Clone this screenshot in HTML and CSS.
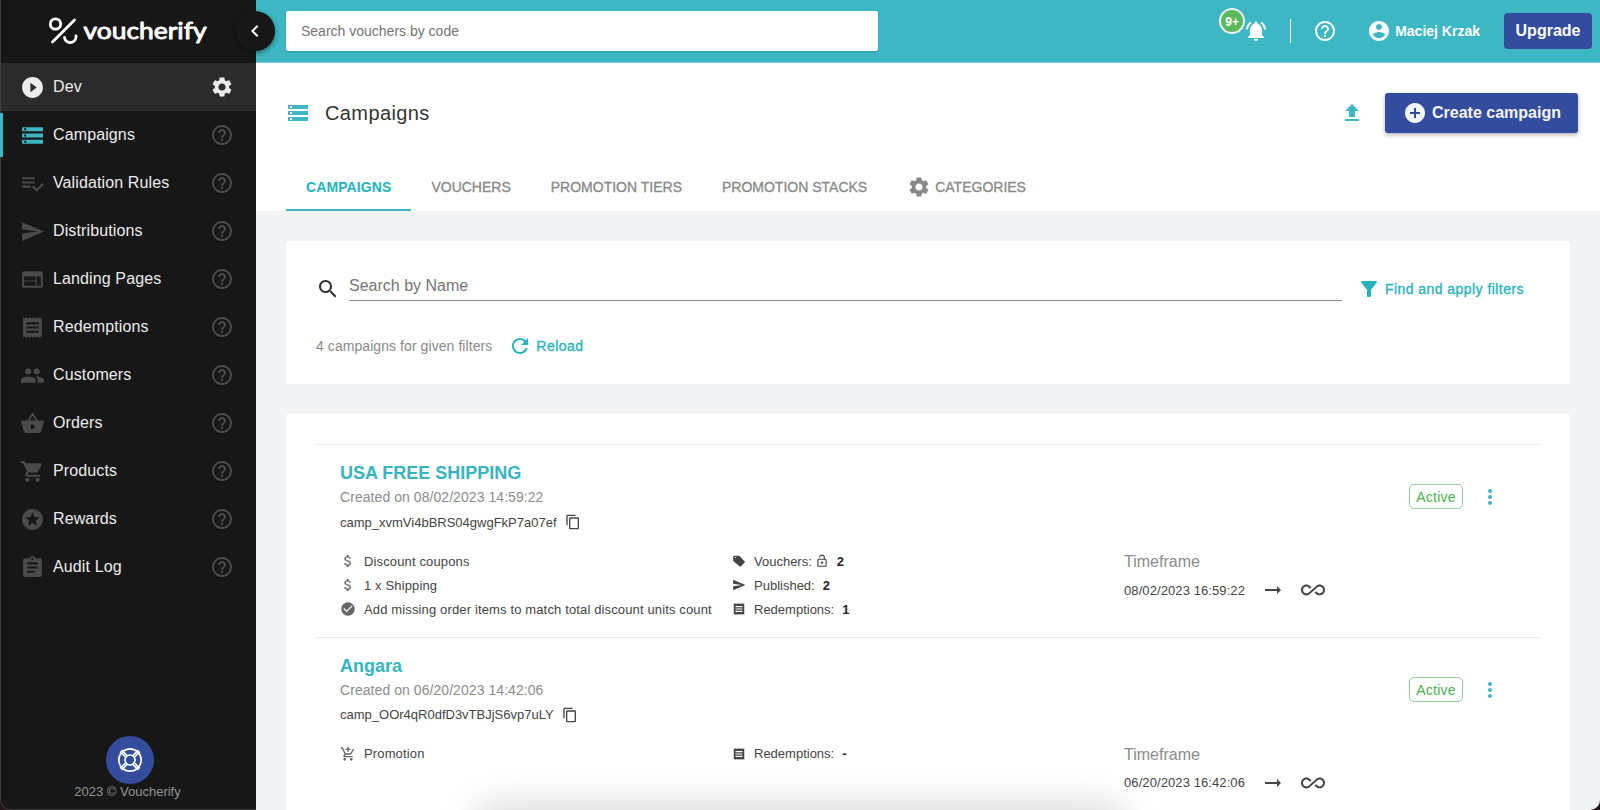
FILE: index.html
```html
<!DOCTYPE html>
<html lang="en">
<head>
    <meta charset="UTF-8"/>
    <meta name="viewport" content="width=device-width, initial-scale=1"/>
    <title>Campaigns - Voucherify</title>
    <link rel="stylesheet" href="styles.css">
</head>
<body>
<!-- icon sprite -->
<svg class="sprite">
    <symbol id="i-campaigns" viewBox="0 0 24 24"><path d="M2 20h20v-4H2v4zm2-3h2v2H4v-2zM2 4v4h20V4H2zm4 3H4V5h2v2zm-4 7h20v-4H2v4zm2-3h2v2H4v-2z"/></symbol>
    <symbol id="i-rules" viewBox="0 0 24 24"><path d="M14 10H2v2h12v-2zm0-4H2v2h12V6zM2 16h8v-2H2v2zm19.5-4.5L23 13l-6.99 7-4.51-4.5L13 14l3.01 3 5.49-5.5z"/></symbol>
    <symbol id="i-send" viewBox="0 0 24 24"><path d="M2.01 21L23 12 2.01 3 2 10l15 2-15 2z"/></symbol>
    <symbol id="i-web" viewBox="0 0 24 24"><path d="M20 4H4c-1.1 0-1.99.9-1.99 2L2 18c0 1.1.9 2 2 2h16c1.1 0 2-.9 2-2V6c0-1.1-.9-2-2-2zm-5 14H4v-4h11v4zm0-5H4V9h11v4zm5 5h-4V9h4v9z"/></symbol>
    <symbol id="i-receipt" viewBox="0 0 24 24"><path d="M18 17H6v-2h12v2zm0-4H6v-2h12v2zm0-4H6V7h12v2zM3 22l1.5-1.5L6 22l1.5-1.5L9 22l1.5-1.5L12 22l1.5-1.5L15 22l1.5-1.5L18 22l1.5-1.5L21 22V2l-1.5 1.5L18 2l-1.5 1.5L15 2l-1.5 1.5L12 2l-1.5 1.5L9 2 7.5 3.5 6 2 4.5 3.5 3 2v20z"/></symbol>
    <symbol id="i-people" viewBox="0 0 24 24"><path d="M16 11c1.66 0 2.99-1.34 2.99-3S17.66 5 16 5c-1.66 0-3 1.34-3 3s1.34 3 3 3zm-8 0c1.66 0 2.99-1.34 2.99-3S9.66 5 8 5C6.34 5 5 6.34 5 8s1.34 3 3 3zm0 2c-2.33 0-7 1.17-7 3.5V19h14v-2.5c0-2.33-4.67-3.5-7-3.5zm8 0c-.29 0-.62.02-.97.05 1.16.84 1.97 1.97 1.97 3.45V19h6v-2.5c0-2.33-4.67-3.5-7-3.5z"/></symbol>
    <symbol id="i-basket" viewBox="0 0 24 24"><path d="M17.21 9l-4.38-6.56c-.19-.28-.51-.42-.83-.42-.32 0-.64.14-.83.43L6.79 9H2c-.55 0-1 .45-1 1 0 .09.01.18.04.27l2.54 9.27c.23.84 1 1.46 1.92 1.46h13c.92 0 1.69-.62 1.93-1.46l2.54-9.27L23 10c0-.55-.45-1-1-1h-4.79zM9 9l3-4.4L15 9H9zm3 8c-1.1 0-2-.9-2-2s.9-2 2-2 2 .9 2 2-.9 2-2 2z"/></symbol>
    <symbol id="i-cart" viewBox="0 0 24 24"><path d="M7 18c-1.1 0-1.99.9-1.99 2S5.9 22 7 22s2-.9 2-2-.9-2-2-2zM1 2v2h2l3.6 7.59-1.35 2.45c-.16.28-.25.61-.25.96 0 1.1.9 2 2 2h12v-2H7.42c-.14 0-.25-.11-.25-.25l.03-.12.9-1.63h7.45c.75 0 1.41-.41 1.75-1.03l3.58-6.49c.08-.14.12-.31.12-.48 0-.55-.45-1-1-1H5.21l-.94-2H1zm16 16c-1.1 0-1.99.9-1.99 2s.89 2 1.99 2 2-.9 2-2-.9-2-2-2z"/></symbol>
    <symbol id="i-stars" viewBox="0 0 24 24"><path d="M11.99 2C6.47 2 2 6.48 2 12s4.47 10 9.99 10C17.52 22 22 17.52 22 12S17.52 2 11.99 2zm4.24 16L12 15.45 7.77 18l1.12-4.81-3.73-3.23 4.92-.42L12 5l1.92 4.53 4.92.42-3.73 3.23L16.23 18z"/></symbol>
    <symbol id="i-log" viewBox="0 0 24 24"><path d="M19 3h-4.18C14.4 1.84 13.3 1 12 1c-1.3 0-2.4.84-2.82 2H5c-1.1 0-2 .9-2 2v14c0 1.1.9 2 2 2h14c1.1 0 2-.9 2-2V5c0-1.1-.9-2-2-2zm-7 0c.55 0 1 .45 1 1s-.45 1-1 1-1-.45-1-1 .45-1 1-1zm2 14H7v-2h7v2zm3-4H7v-2h10v2zm0-4H7V7h10v2z"/></symbol>
    <symbol id="i-help" viewBox="0 0 24 24"><path d="M11 18h2v-2h-2v2zm1-16C6.48 2 2 6.48 2 12s4.48 10 10 10 10-4.48 10-10S17.52 2 12 2zm0 18c-4.41 0-8-3.59-8-8s3.59-8 8-8 8 3.59 8 8-3.59 8-8 8zm0-14c-2.21 0-4 1.79-4 4h2c0-1.1.9-2 2-2s2 .9 2 2c0 2-3 1.75-3 5h2c0-2.25 3-2.5 3-5 0-2.21-1.79-4-4-4z"/></symbol>
    <symbol id="i-play" viewBox="0 0 24 24"><path d="M12 2C6.48 2 2 6.48 2 12s4.48 10 10 10 10-4.48 10-10S17.52 2 12 2zm-2 14.5v-9l6 4.5-6 4.5z"/></symbol>
    <symbol id="i-gear" viewBox="0 0 24 24"><path d="M19.14 12.94c.04-.3.06-.61.06-.94 0-.32-.02-.64-.07-.94l2.03-1.58c.18-.14.23-.41.12-.61l-1.92-3.32c-.12-.22-.37-.29-.59-.22l-2.39.96c-.5-.38-1.03-.7-1.62-.94l-.36-2.54c-.04-.24-.24-.41-.48-.41h-3.84c-.24 0-.43.17-.47.41l-.36 2.54c-.59.24-1.13.57-1.62.94l-2.39-.96c-.22-.08-.47 0-.59.22L2.74 8.87c-.12.21-.08.47.12.61l2.03 1.58c-.05.3-.09.63-.09.94s.02.64.07.94l-2.03 1.58c-.18.14-.23.41-.12.61l1.92 3.32c.12.22.37.29.59.22l2.39-.96c.5.38 1.03.7 1.62.94l.36 2.54c.05.24.24.41.48.41h3.84c.24 0 .44-.17.47-.41l.36-2.54c.59-.24 1.13-.56 1.62-.94l2.39.96c.22.08.47 0 .59-.22l1.92-3.32c.12-.22.07-.47-.12-.61l-2.01-1.58zM12 15.6c-1.98 0-3.6-1.62-3.6-3.6s1.62-3.6 3.6-3.6 3.6 1.62 3.6 3.6-1.62 3.6-3.6 3.6z"/></symbol>
    <symbol id="i-account" viewBox="0 0 24 24"><path d="M12 2C6.48 2 2 6.48 2 12s4.48 10 10 10 10-4.48 10-10S17.52 2 12 2zm0 3c1.66 0 3 1.34 3 3s-1.34 3-3 3-3-1.34-3-3 1.34-3 3-3zm0 14.2c-2.5 0-4.71-1.28-6-3.22.03-1.99 4-3.08 6-3.08 1.99 0 5.97 1.09 6 3.08-1.29 1.94-3.5 3.22-6 3.22z"/></symbol>
    <symbol id="i-bell" viewBox="0 0 24 24"><path d="M7.58 4.08L6.15 2.65C3.75 4.48 2.17 7.3 2.03 10.5h2c.15-2.65 1.51-4.97 3.55-6.42zm12.39 6.42h2c-.15-3.2-1.73-6.02-4.12-7.85l-1.42 1.43c2.02 1.45 3.39 3.77 3.54 6.42zM18 11c0-3.07-1.64-5.64-4.5-6.32V4c0-.83-.67-1.5-1.5-1.5s-1.5.67-1.5 1.5v.68C7.63 5.36 6 7.92 6 11v5l-2 2v1h16v-1l-2-2v-5zm-6 11c.14 0 .27-.01.4-.04.65-.14 1.18-.58 1.44-1.18.1-.24.15-.5.15-.78h-4c.01 1.1.9 2 2.01 2z"/></symbol>
    <symbol id="i-add" viewBox="0 0 24 24"><path d="M12 2C6.48 2 2 6.48 2 12s4.48 10 10 10 10-4.48 10-10S17.52 2 12 2zm5 11h-4v4h-2v-4H7v-2h4V7h2v4h4v2z"/></symbol>
    <symbol id="i-upload" viewBox="0 0 24 24"><path d="M9 16h6v-6h4l-7-7-7 7h4v6zm-4 2h14v2H5v-2z"/></symbol>
    <symbol id="i-search" viewBox="0 0 24 24"><path d="M15.5 14h-.79l-.28-.27C15.41 12.59 16 11.11 16 9.5 16 5.91 13.09 3 9.5 3S3 5.91 3 9.5 5.91 16 9.5 16c1.61 0 3.09-.59 4.23-1.57l.27.28v.79l5 4.99L20.49 19l-4.99-5zm-6 0C7.01 14 5 11.99 5 9.5S7.01 5 9.5 5 14 7.01 14 9.5 11.99 14 9.5 14z"/></symbol>
    <symbol id="i-filter" viewBox="0 0 24 24"><path d="M4.25 5.61C6.27 8.2 10 13 10 13v6c0 .55.45 1 1 1h2c.55 0 1-.45 1-1v-6s3.72-4.8 5.74-7.39c.51-.66.04-1.61-.79-1.61H5.04c-.83 0-1.3.95-.79 1.61z"/></symbol>
    <symbol id="i-refresh" viewBox="0 0 24 24"><path d="M17.65 6.35C16.2 4.9 14.21 4 12 4c-4.42 0-7.99 3.58-7.99 8s3.57 8 7.99 8c3.73 0 6.84-2.55 7.73-6h-2.08c-.82 2.33-3.04 4-5.65 4-3.31 0-6-2.69-6-6s2.69-6 6-6c1.66 0 3.14.69 4.22 1.78L13 11h7V4l-2.35 2.35z"/></symbol>
    <symbol id="i-copy" viewBox="0 0 24 24"><path d="M16 1H4c-1.1 0-2 .9-2 2v14h2V3h12V1zm3 4H8c-1.1 0-2 .9-2 2v14c0 1.1.9 2 2 2h11c1.1 0 2-.9 2-2V7c0-1.1-.9-2-2-2zm0 16H8V7h11v14z"/></symbol>
    <symbol id="i-money" viewBox="0 0 24 24"><path d="M11.8 10.9c-2.27-.59-3-1.2-3-2.15 0-1.09 1.01-1.85 2.7-1.85 1.78 0 2.44.85 2.5 2.1h2.21c-.07-1.72-1.12-3.3-3.21-3.81V3h-3v2.16c-1.94.42-3.5 1.68-3.5 3.61 0 2.31 1.91 3.46 4.7 4.13 2.5.6 3 1.48 3 2.41 0 .69-.49 1.79-2.7 1.79-2.06 0-2.87-.92-2.98-2.1h-2.2c.12 2.19 1.76 3.42 3.68 3.83V21h3v-2.15c1.95-.37 3.5-1.5 3.5-3.55 0-2.84-2.43-3.81-4.7-4.4z"/></symbol>
    <symbol id="i-check" viewBox="0 0 24 24"><path d="M12 2C6.48 2 2 6.48 2 12s4.48 10 10 10 10-4.48 10-10S17.52 2 12 2zm-2 15l-5-5 1.41-1.41L10 14.17l7.59-7.59L19 8l-9 9z"/></symbol>
    <symbol id="i-tag" viewBox="0 0 24 24"><path fill-rule="evenodd" d="M2 4.500c0-1 .6-1.500 1.500-1.500h8c.6 0 1 .2 1.400.6l8.500 9c.8.8.8 1.800 0 2.600l-6 6c-.8.8-1.900.7-2.600-.1L2.700 12.500c-.4-.4-.7-.9-.7-1.500zM5 5v2h2V5z"/></symbol>
    <symbol id="i-lock" viewBox="0 0 24 24"><path d="M12 17c1.100 0 2-.9 2-2s-.9-2-2-2-2 .9-2 2 .9 2 2 2zm6-9h-1V6c0-2.760-2.240-5-5-5S7 3.240 7 6h1.900c0-1.710 1.390-3.100 3.100-3.100 1.710 0 3.100 1.390 3.100 3.100v2H6c-1.100 0-2 .9-2 2v10c0 1.100.9 2 2 2h12c1.100 0 2-.9 2-2V10c0-1.100-.9-2-2-2zm0 12H6V10h12v10z"/></symbol>
    <symbol id="i-more" viewBox="0 0 24 24"><circle cx="12" cy="6" r="2"/><circle cx="12" cy="12" r="2"/><circle cx="12" cy="18" r="2"/></symbol>
    <symbol id="i-infinity" viewBox="0 0 24 24"><path d="M18.6 6.62c-1.44 0-2.8.56-3.77 1.53L12 10.66 10.48 12h.01L7.8 14.39c-.64.64-1.49.99-2.4.99-1.87 0-3.39-1.51-3.39-3.38S3.53 8.62 5.4 8.62c.91 0 1.76.35 2.44 1.03l1.13 1 1.51-1.34L9.22 8.2C8.2 7.18 6.84 6.62 5.4 6.62 2.42 6.62 0 9.04 0 12s2.42 5.38 5.4 5.38c1.44 0 2.8-.56 3.77-1.53l2.83-2.5.01.01L13.52 12h-.01l2.69-2.39c.64-.64 1.49-.99 2.4-.99 1.87 0 3.39 1.51 3.39 3.38s-1.52 3.38-3.39 3.38c-.9 0-1.76-.35-2.44-1.03l-1.14-1.01-1.51 1.34 1.27 1.12c1.02 1.01 2.37 1.57 3.82 1.57 2.98 0 5.4-2.41 5.4-5.38s-2.42-5.37-5.4-5.37z"/></symbol>
    <symbol id="i-arrow" viewBox="0 0 24 24"><path d="M16.01 11H4v2h12.010v3L20 12l-3.990-4z"/></symbol>
    <symbol id="i-cart-add" viewBox="0 0 24 24"><path d="M11 9h2V6h3V4h-3V1h-2v3H8v2h3v3zm-4 9c-1.100 0-1.990.9-1.990 2S5.900 22 7 22s2-.9 2-2-.9-2-2-2zm10 0c-1.100 0-1.990.9-1.990 2s.89 2 1.990 2 2-.9 2-2-.9-2-2-2zm-9.830-3.250l.03-.12.9-1.630h7.450c.75 0 1.410-.41 1.750-1.030l3.860-7.010L19.420 4h-.01l-1.100 2-2.760 5H8.530l-.13-.27L6.160 6l-.95-2-.94-2H1v2h2l3.600 7.590-1.350 2.450c-.16.28-.25.61-.25.96 0 1.100.9 2 2 2h12v-2H7.420c-.13 0-.25-.11-.25-.25z"/></symbol>
    <symbol id="i-left" viewBox="0 0 24 24"><path d="M15.410 7.410L14 6l-6 6 6 6 1.410-1.410L10.830 12z"/></symbol>
</svg>

<div class="app">
    <aside class="sidebar">
        <div class="logo">
            <svg width="160" height="36" viewBox="0 0 160 36">
                <g fill="none" stroke="#fff" stroke-width="2.800" stroke-linecap="round">
                    <circle cx="7.500" cy="11" r="5.200"/>
                    <path d="M26.500 7L4.500 29M16.500 24.500a5.800 5.800 0 0 0 11.500 0v-1.500"/>
                </g>
                <text class="logo-text" x="35.500" y="25.500" textLength="123" lengthAdjust="spacingAndGlyphs">voucherify</text>
            </svg>
            <button class="collapse" type="button"><svg class="icon"><use href="#i-left"/></svg></button>
        </div>
        <div class="project">
            <svg class="icon nav-icon"><use href="#i-play"/></svg>
            <span>Dev</span>
            <svg class="icon nav-end"><use href="#i-gear"/></svg>
        </div>
        <nav class="nav">
            <a class="nav-item active"><svg class="icon nav-icon"><use href="#i-campaigns"/></svg><span>Campaigns</span><svg class="icon nav-end"><use href="#i-help"/></svg></a>
            <a class="nav-item"><svg class="icon nav-icon"><use href="#i-rules"/></svg><span>Validation Rules</span><svg class="icon nav-end"><use href="#i-help"/></svg></a>
            <a class="nav-item"><svg class="icon nav-icon"><use href="#i-send"/></svg><span>Distributions</span><svg class="icon nav-end"><use href="#i-help"/></svg></a>
            <a class="nav-item"><svg class="icon nav-icon"><use href="#i-web"/></svg><span>Landing Pages</span><svg class="icon nav-end"><use href="#i-help"/></svg></a>
            <a class="nav-item"><svg class="icon nav-icon"><use href="#i-receipt"/></svg><span>Redemptions</span><svg class="icon nav-end"><use href="#i-help"/></svg></a>
            <a class="nav-item"><svg class="icon nav-icon"><use href="#i-people"/></svg><span>Customers</span><svg class="icon nav-end"><use href="#i-help"/></svg></a>
            <a class="nav-item"><svg class="icon nav-icon"><use href="#i-basket"/></svg><span>Orders</span><svg class="icon nav-end"><use href="#i-help"/></svg></a>
            <a class="nav-item"><svg class="icon nav-icon"><use href="#i-cart"/></svg><span>Products</span><svg class="icon nav-end"><use href="#i-help"/></svg></a>
            <a class="nav-item"><svg class="icon nav-icon"><use href="#i-stars"/></svg><span>Rewards</span><svg class="icon nav-end"><use href="#i-help"/></svg></a>
            <a class="nav-item"><svg class="icon nav-icon"><use href="#i-log"/></svg><span>Audit Log</span><svg class="icon nav-end"><use href="#i-help"/></svg></a>
        </nav>
        <div class="sidebar-footer">
            <button class="support" type="button">
                <svg width="26" height="26" viewBox="0 0 26 26" fill="none" stroke="#fff" stroke-width="1.700">
                    <circle cx="13" cy="13" r="11.200"/>
                    <circle cx="13" cy="13" r="5"/>
                    <path d="M8.500 10L3.800 5.300 5.300 3.800 10 8.500M16 8.500l4.700-4.700 1.500 1.500-4.700 4.700M17.500 16l4.700 4.700-1.500 1.500-4.700-4.700M10 17.500l-4.700 4.700-1.500-1.500L8.500 16"/>
                </svg>
            </button>
            <div class="copyright">2023 © Voucherify</div>
        </div>
    </aside>

    <div class="main">
        <header class="topbar">
            <input class="top-search" type="text" placeholder="Search vouchers by code">
            <div class="top-actions">
                <div class="bell">
                    <svg class="icon"><use href="#i-bell"/></svg>
                    <span class="bell-count">9+</span>
                </div>
                <span class="divider"></span>
                <svg class="icon"><use href="#i-help"/></svg>
                <div class="user"><svg class="icon"><use href="#i-account"/></svg><span>Maciej Krzak</span></div>
                <button class="upgrade" type="button">Upgrade</button>
            </div>
        </header>

        <section class="page-head">
            <div class="title-row">
                <svg class="icon teal"><use href="#i-campaigns"/></svg>
                <h1>Campaigns</h1>
                <svg class="icon teal upload"><use href="#i-upload"/></svg>
                <button class="create" type="button"><svg class="icon"><use href="#i-add"/></svg><span>Create campaign</span></button>
            </div>
            <div class="tabs">
                <a class="tab selected">CAMPAIGNS</a>
                <a class="tab">VOUCHERS</a>
                <a class="tab">PROMOTION TIERS</a>
                <a class="tab">PROMOTION STACKS</a>
                <a class="tab"><svg class="icon"><use href="#i-gear"/></svg>CATEGORIES</a>
            </div>
        </section>

        <section class="content">
            <div class="card filters">
                <div class="filter-row">
                    <svg class="icon search-icon"><use href="#i-search"/></svg>
                    <input class="name-search" type="text" placeholder="Search by Name">
                    <a class="link find"><svg class="icon"><use href="#i-filter"/></svg><span>Find and apply filters</span></a>
                </div>
                <div class="count-row">
                    <span class="count">4 campaigns for given filters</span>
                    <a class="link reload"><svg class="icon"><use href="#i-refresh"/></svg><span>Reload</span></a>
                </div>
            </div>

            <div class="card list">
                <article class="campaign">
                    <div class="campaign-head">
                        <div>
                            <h2>USA FREE SHIPPING</h2>
                            <div class="created">Created on 08/02/2023 14:59:22</div>
                            <div class="camp-id"><span>camp_xvmVi4bBRS04gwgFkP7a07ef</span><svg class="icon small"><use href="#i-copy"/></svg></div>
                        </div>
                        <span class="status">Active</span>
                        <svg class="icon teal"><use href="#i-more"/></svg>
                    </div>
                    <div class="details">
                        <ul class="benefits">
                            <li><svg class="icon small"><use href="#i-money"/></svg><span>Discount coupons</span></li>
                            <li><svg class="icon small"><use href="#i-money"/></svg><span>1 x Shipping</span></li>
                            <li><svg class="icon small"><use href="#i-check"/></svg><span>Add missing order items to match total discount units count</span></li>
                        </ul>
                        <ul class="stats">
                            <li><svg class="icon small"><use href="#i-tag"/></svg><span>Vouchers:</span><svg class="icon lock"><use href="#i-lock"/></svg><b>2</b></li>
                            <li><svg class="icon small"><use href="#i-send"/></svg><span>Published:</span><b>2</b></li>
                            <li><svg class="icon small"><use href="#i-receipt"/></svg><span>Redemptions:</span><b>1</b></li>
                        </ul>
                        <div class="timeframe">
                            <div class="label">Timeframe</div>
                            <div class="range"><span>08/02/2023 16:59:22</span><svg class="icon"><use href="#i-arrow"/></svg><svg class="icon"><use href="#i-infinity"/></svg></div>
                        </div>
                    </div>
                </article>

                <article class="campaign">
                    <div class="campaign-head">
                        <div>
                            <h2>Angara</h2>
                            <div class="created">Created on 06/20/2023 14:42:06</div>
                            <div class="camp-id"><span>camp_OOr4qR0dfD3vTBJjS6vp7uLY</span><svg class="icon small"><use href="#i-copy"/></svg></div>
                        </div>
                        <span class="status">Active</span>
                        <svg class="icon teal"><use href="#i-more"/></svg>
                    </div>
                    <div class="details">
                        <ul class="benefits">
                            <li><svg class="icon small"><use href="#i-cart-add"/></svg><span>Promotion</span></li>
                        </ul>
                        <ul class="stats">
                            <li><svg class="icon small"><use href="#i-receipt"/></svg><span>Redemptions:</span><b>-</b></li>
                        </ul>
                        <div class="timeframe">
                            <div class="label">Timeframe</div>
                            <div class="range"><span>06/20/2023 16:42:06</span><svg class="icon"><use href="#i-arrow"/></svg><svg class="icon"><use href="#i-infinity"/></svg></div>
                        </div>
                    </div>
                </article>
            </div>
        </section>
    </div>
    <div class="bottom-shadow"></div>
</div>
</body>
</html>
```
FILE: styles.css
```css
* {
    box-sizing: border-box;
}

body {
    margin: 0;
    background-color: #24161a;
    font-family: "Liberation Sans", Arial, sans-serif;
    color: #444;
    overflow: hidden;
}

h1, h2, ul {
    margin: 0;
    padding: 0;
    list-style: none;
}

button, input {
    font-family: inherit;
    border: none;
    padding: 0;
}

.sprite {
    display: none;
}

.icon {
    width: 24px;
    height: 24px;
    flex: none;
    fill: currentColor;
}

.icon.small {
    width: 16px;
    height: 16px;
}

.teal {
    color: #3db7c3;
}

.app {
    display: flex;
    position: relative;
    height: 810px;
    overflow: hidden;
    border-radius: 0 0 10px 10px;
}

/* sidebar */
.sidebar {
    width: 256px;
    display: flex;
    flex-direction: column;
    background-color: #171717;
    border-left: 1px solid #3c3c3c;
    border-bottom: 1px solid #3c3c3c;
    border-radius: 0 0 0 10px;
    color: #ececec;
    font-size: 16px;
    letter-spacing: 0.12px;
}

.logo {
    position: relative;
    height: 63px;
    padding: 13px 0 0 47px;
}

.logo-text {
    font-family: Lato, sans-serif;
    font-size: 23px;
    letter-spacing: 0;
    fill: #fff;
    stroke: #fff;
    stroke-width: 0.9px;
    stroke-linejoin: round;
}

.collapse {
    position: absolute;
    z-index: 2;
    top: 11px;
    right: -19px;
    width: 40px;
    height: 40px;
    padding-top: 3px;
    border-radius: 50%;
    background-color: #171717;
    color: #fff;
    box-shadow: 0 2px 5px rgba(0, 0, 0, 0.45);
}

.project, .nav-item {
    display: flex;
    align-items: center;
    height: 48px;
    padding: 0 22px 0 19px;
}

.project {
    background-color: #2b2b2b;
}

.nav-icon {
    width: 25px;
    height: 25px;
    margin-right: 8px;
}

.nav-end {
    margin-left: auto;
}

.nav-item {
    position: relative;
}

.nav-item .icon {
    color: #4a4a4a;
}

.nav-item.active .nav-icon {
    color: #3db7c3;
}

.nav-item.active::before {
    content: "";
    position: absolute;
    left: -1px;
    top: 2px;
    width: 3px;
    height: 44px;
    background-color: #3db7c3;
}

.sidebar-footer {
    margin-top: auto;
    padding: 0 0 9px 2px;
    text-align: center;
}

.support {
    display: flex;
    align-items: center;
    justify-content: center;
    width: 48px;
    height: 48px;
    margin: 0 auto;
    border-radius: 50%;
    background-color: #344c9d;
}

.copyright {
    padding-right: 4px;
    font-size: 13px;
    line-height: 16px;
    letter-spacing: 0;
    color: #939393;
}

/* top bar */
.main {
    flex: 1;
    min-width: 0;
    background-color: #f2f3f5;
}

.topbar {
    display: flex;
    align-items: center;
    justify-content: space-between;
    height: 63px;
    padding: 0 8px 0 30px;
    background-color: #3db7c3;
    border-bottom: 1px solid #7bced6;
    color: #fff;
}

.top-search {
    width: 592px;
    height: 40px;
    padding-left: 15px;
    border-radius: 2px;
    font-size: 14px;
    box-shadow: 0 1px 2px rgba(0, 0, 0, 0.2);
}

.top-search::placeholder {
    color: #757575;
}

.top-actions {
    display: flex;
    align-items: center;
}

.bell {
    position: relative;
    height: 24px;
}

.bell-count {
    position: absolute;
    left: -25px;
    top: -11px;
    width: 26px;
    height: 26px;
    border: 2px solid #e6f5f0;
    border-radius: 50%;
    background-color: #5cb85c;
    font-size: 12px;
    font-weight: bold;
    line-height: 24px;
    text-align: center;
}

.divider {
    width: 1px;
    height: 24px;
    margin: 0 22px;
    background-color: #fff;
}

.user {
    display: flex;
    align-items: center;
    gap: 4px;
    margin: 0 24px 0 30px;
    font-size: 14px;
    font-weight: bold;
}

.upgrade {
    width: 88px;
    height: 36px;
    border-radius: 4px;
    background-color: #344c9d;
    color: #fff;
    font-size: 16px;
    font-weight: bold;
}

/* page header */
.page-head {
    height: 148px;
    padding: 30px 22px 0 30px;
    background-color: #fff;
}

.title-row {
    display: flex;
    align-items: center;
    height: 40px;
}

h1 {
    margin-left: 15px;
    font-size: 20px;
    font-weight: normal;
    letter-spacing: 0.4px;
    color: #333;
}

.upload {
    margin-left: auto;
}

.create {
    display: flex;
    align-items: center;
    width: 193px;
    height: 40px;
    margin-left: 21px;
    padding-left: 18px;
    gap: 5px;
    border-radius: 3px;
    background-color: #344c9d;
    box-shadow: 0 2px 4px rgba(0, 0, 0, 0.3);
    color: #f5f6fc;
    font-size: 16px;
    font-weight: bold;
}

.tabs {
    display: flex;
    margin-top: 30px;
    height: 48px;
}

.tab {
    display: flex;
    align-items: center;
    padding: 2px 20px 0;
    border-bottom: 2px solid transparent;
    font-size: 14px;
    color: #888;
    -webkit-text-stroke: 0.3px #888;
}

.tab .icon {
    margin-right: 4px;
}

.tab.selected {
    border-color: #3db7c3;
    color: #25b3c0;
    font-weight: bold;
    letter-spacing: 0.1px;
    -webkit-text-stroke: 0;
}

/* cards */
.content {
    padding: 30px 30px 0;
}

.card {
    background-color: #fff;
    border-radius: 3px;
}

.filters {
    height: 143px;
    padding: 28px 46px 0 30px;
}

.filter-row, .count-row, .link {
    display: flex;
    align-items: center;
}

.search-icon {
    margin: 8px 9px 0 0;
    color: #333;
}

.name-search {
    flex: 1;
    height: 25px;
    margin-top: 7px;
    padding-bottom: 4px;
    border-bottom: 1px solid #8c8c8c;
    font-size: 16px;
}

.name-search::placeholder {
    color: #757575;
}

.link {
    gap: 4px;
    color: #25b3c0;
    font-size: 14px;
    letter-spacing: 0.45px;
    -webkit-text-stroke: 0.3px #25b3c0;
}

.find {
    margin: 8px 0 0 15px;
}

.count-row {
    margin-top: 33px;
}

.count {
    margin-right: 16px;
    font-size: 14px;
    letter-spacing: 0.07px;
    color: #8a8a8a;
}

/* campaign list */
.list {
    height: 420px;
    margin-top: 30px;
    padding: 30px 30px 0;
}

.campaign {
    height: 192.500px;
    padding: 16px 24px 0;
    border-top: 1px solid #ececec;
}

.campaign-head {
    display: flex;
    height: 88px;
}

.campaign-head > .status {
    margin: 23px 15px 0 auto;
}

.campaign-head > .icon {
    margin: 24px 14px 0 0;
}

h2 {
    font-size: 18px;
    line-height: 24px;
    color: #35b5c1;
}

.created {
    font-size: 14px;
    line-height: 24px;
    letter-spacing: 0.06px;
    color: #8c8c8c;
}

.camp-id {
    display: flex;
    align-items: center;
    gap: 8px;
    height: 26px;
    font-size: 13px;
}

.status {
    width: 54px;
    height: 25px;
    border: 1px solid #8fcf8f;
    border-radius: 5px;
    color: #4caf50;
    font-size: 14px;
    letter-spacing: 0.2px;
    line-height: 24px;
    text-align: center;
}

.details {
    display: grid;
    grid-template-columns: 392px 392px 1fr;
    font-size: 13px;
}

.details li {
    display: flex;
    align-items: center;
    height: 24px;
    gap: 8px;
}

.benefits {
    letter-spacing: 0.14px;
}

.details .small {
    color: #666;
}

.stats .small {
    width: 14px;
    height: 14px;
    color: #444;
}

.stats b {
    color: #222;
}

.stats .lock {
    width: 14px;
    height: 14px;
    margin-left: -5px;
}

.label {
    font-size: 16px;
    line-height: 25px;
    color: #8c8c8c;
}

.range {
    display: flex;
    align-items: center;
    gap: 16px;
    height: 32px;
    letter-spacing: 0.09px;
}

/* soft shade along the bottom edge of the window */
.bottom-shadow {
    position: absolute;
    left: 490px;
    bottom: -32px;
    width: 620px;
    height: 20px;
    box-shadow: 0 0 40px 12px rgba(0, 0, 0, 0.2);
}
```
